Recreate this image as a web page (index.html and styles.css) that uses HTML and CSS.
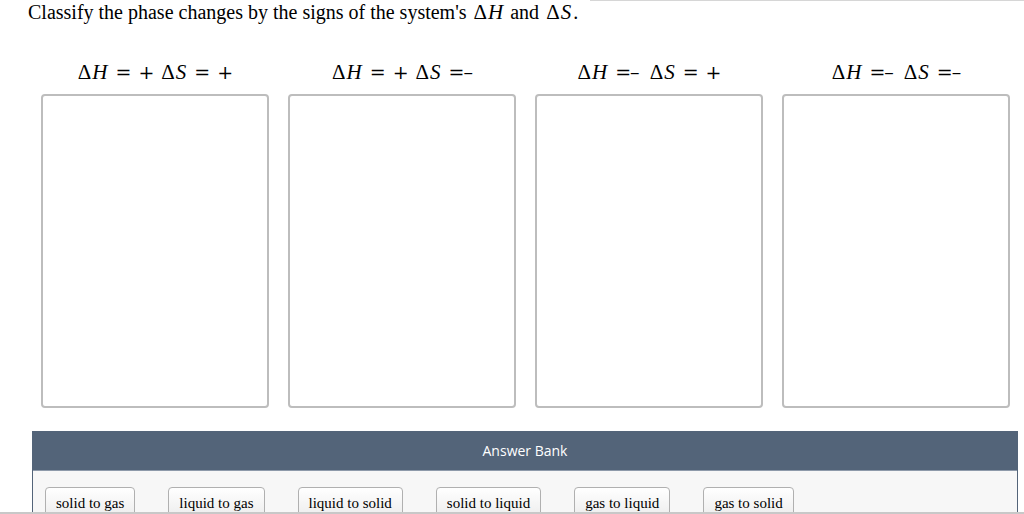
FILE: index.html
```html
<!DOCTYPE html>
<html lang="en">
<head>
<meta charset="utf-8">
<title>Classify the phase changes</title>
<link rel="stylesheet" href="styles.css">
</head>
<body>
<div class="viewport">
  <div class="topline"></div>
  <p class="prompt">Classify the phase changes by the signs of the system's <span class="m">Δ<i>H</i></span> and <span class="m">Δ<i>S</i></span>.</p>

  <div class="bins">
    <div class="bin">
      <div class="bin-label"><span>Δ<i>H</i></span><span class="op">=</span><span class="op">+</span><span>Δ<i>S</i></span><span class="op">=</span><span class="op">+</span></div>
      <div class="drop"></div>
    </div>
    <div class="bin">
      <div class="bin-label"><span>Δ<i>H</i></span><span class="op">=</span><span class="op">+</span><span>Δ<i>S</i></span><span class="op">=–</span></div>
      <div class="drop"></div>
    </div>
    <div class="bin">
      <div class="bin-label"><span>Δ<i>H</i></span><span class="op neg">=–</span><span>Δ<i>S</i></span><span class="op">=</span><span class="op">+</span></div>
      <div class="drop"></div>
    </div>
    <div class="bin">
      <div class="bin-label"><span>Δ<i>H</i></span><span class="op neg">=–</span><span>Δ<i>S</i></span><span class="op">=–</span></div>
      <div class="drop"></div>
    </div>
  </div>

  <section class="bank">
    <header class="bank-head">Answer Bank</header>
    <div class="bank-body">
      <span class="chip">solid to gas</span>
      <span class="chip">liquid to gas</span>
      <span class="chip">liquid to solid</span>
      <span class="chip">solid to liquid</span>
      <span class="chip">gas to liquid</span>
      <span class="chip">gas to solid</span>
    </div>
  </section>
</div>
</body>
</html>
```

FILE: styles.css
```css
html, body {
  margin: 0;
  padding: 0;
  background: #ffffff;
}

.viewport {
  height: 512px;
  overflow: hidden;
  border-bottom: 2px solid #c8c8c8;
  font-family: "Liberation Serif", "Times New Roman", serif;
  color: #000;
}

.topline {
  height: 1px;
  margin-left: 590px;
  background: #d6d6d6;
}

.prompt {
  margin: 0;
  padding: 0 0 0 28px;
  font-size: 20px;
  line-height: 22px;
}

.m {
  font-size: 21px;
  margin: 0 2px;
}

.m i {
  font-style: italic;
  margin-left: 1px;
}

.bins {
  display: grid;
  grid-template-columns: repeat(4, 228px);
  column-gap: 19px;
  padding-left: 41px;
  margin-top: 38px;
}

.bin-label {
  display: flex;
  justify-content: center;
  align-items: baseline;
  gap: 8px;
  font-size: 21px;
  line-height: 22px;
  height: 22px;
}

.bin-label i {
  font-style: italic;
  margin-left: 1px;
}

.bin-label .op {
  font-family: "DejaVu Serif", "Liberation Serif", serif;
  font-size: 19px;
  letter-spacing: -1px;
}

.bin-label .neg {
  margin-right: 3px;
}

.drop {
  margin-top: 11px;
  height: 310px;
  border: 2px solid #bdbdbd;
  border-radius: 4px;
  background: #fff;
}

.bank {
  margin: 23px 6px 0 32px;
  border: 1px solid #536479;
  border-top: none;
}

.bank-head {
  height: 40px;
  line-height: 40px;
  background: #536479;
  color: #ffffff;
  text-align: center;
  font-family: "Open Sans", "Liberation Sans", sans-serif;
  font-size: 14px;
  border-bottom: 1px solid #8e9aaa;
  box-sizing: border-box;
}

.bank-body {
  background: #f7f7f7;
  display: flex;
  gap: 33px;
  padding: 16px 12px 20px 12px;
  height: 80px;
}

.chip {
  display: inline-block;
  height: 32px;
  padding: 4px 10px 0 10px;
  box-sizing: border-box;
  border: 1px solid #b0b0b0;
  border-radius: 4px;
  background: linear-gradient(#ffffff, #ececec);
  font-size: 15px;
  line-height: 22px;
  white-space: nowrap;
}
```
